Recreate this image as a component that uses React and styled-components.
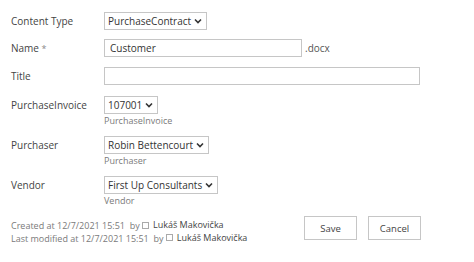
import React from 'react';
import styled, { createGlobalStyle } from 'styled-components';

const Global = createGlobalStyle`
    body {
        margin: 0;
        background: #FFFFFF;
        font-family: "Open Sans", "Noto Sans", sans-serif;
    }
`

const Page = styled.div`
    width: 474px;
    height: 262px;
    padding: 12px 0 0 11px;
    box-sizing: border-box;
    display: flex;
    flex-direction: column;
`

const Row = styled.div`
    display: flex;
    align-items: flex-start;
    margin-bottom: ${p => p.$gap ?? 9}px;
`

const Label = styled.div`
    width: 93px;
    flex-shrink: 0;
    font-size: 10px;
    line-height: 18px;
    color: #444444;
`

const Star = styled.span`
    color: #888888;
    font-size: 9px;
`

const Field = styled.div`
    display: flex;
    flex-direction: column;
    align-items: flex-start;
`

const Inline = styled.div`
    display: flex;
    align-items: center;
`

const Dropdown = styled.div`
    height: 18px;
    box-sizing: border-box;
    border: 1px solid #C6C6C6;
    display: inline-flex;
    align-items: center;
    gap: 3px;
    padding: 0 4px 0 3px;
    font-size: 10px;
    color: #333333;
    background: #FFFFFF;
`

const Input = styled.div`
    width: ${p => p.$width}px;
    height: 18px;
    box-sizing: border-box;
    border: 1px solid #C6C6C6;
    padding: 0 5px;
    font-size: 10px;
    line-height: 16px;
    color: #333333;
`

const Suffix = styled.span`
    font-size: 10px;
    color: #555555;
    margin-left: 3px;
`

const Hint = styled.div`
    font-size: 9px;
    line-height: 13px;
    color: #7A7A7A;
`

const Footer = styled.div`
    display: flex;
    align-items: flex-start;
`

const Meta = styled.div`
    width: 293px;
    font-size: 9px;
    line-height: 12px;
    color: #7A7A7A;
    padding-top: 3px;
`

const Who = styled.span`
    color: #444444;
    display: inline-flex;
    align-items: center;
    gap: 4px;
`

const Box = styled.span`
    width: 7px;
    height: 7px;
    border: 1px solid #AAAAAA;
    box-sizing: border-box;
    display: inline-block;
`

const Buttons = styled.div`
    display: flex;
    gap: 11px;
`

const Button = styled.button`
    width: 53px;
    height: 24px;
    border: 1px solid #C6C6C6;
    background: #FFFFFF;
    font-family: inherit;
    font-size: 9.5px;
    color: #444444;
    padding: 0;
`

const Chevron = () => (
    <svg width="8" height="6" viewBox="0 0 8 6">
        <path d="M1 1.5 L4 4.5 L7 1.5" fill="none" stroke="#333" strokeWidth="1.6"/>
    </svg>
)

const Select = ({ children }) => (
    <Dropdown>{children}<Chevron/></Dropdown>
)

const By = ({ name }) => (
    <>
        &nbsp;&nbsp;by <Who><Box/>{name}</Who>
    </>
)

const App = () => {
    return (
        <Page>
            <Global/>
            <Row>
                <Label>Content Type</Label>
                <Select>PurchaseContract</Select>
            </Row>
            <Row>
                <Label>Name <Star>*</Star></Label>
                <Inline>
                    <Input $width={198}>Customer</Input>
                    <Suffix>.docx</Suffix>
                </Inline>
            </Row>
            <Row $gap={11}>
                <Label>Title</Label>
                <Input $width={316}/>
            </Row>
            <Row>
                <Label>PurchaseInvoice</Label>
                <Field>
                    <Select>107001</Select>
                    <Hint>PurchaseInvoice</Hint>
                </Field>
            </Row>
            <Row>
                <Label>Purchaser</Label>
                <Field>
                    <Select>Robin Bettencourt</Select>
                    <Hint>Purchaser</Hint>
                </Field>
            </Row>
            <Row>
                <Label>Vendor</Label>
                <Field>
                    <Select>First Up Consultants</Select>
                    <Hint>Vendor</Hint>
                </Field>
            </Row>
            <Footer>
                <Meta>
                    <div>Created at 12/7/2021 15:51<By name="Lukáš Makovička"/></div>
                    <div>Last modified at 12/7/2021 15:51<By name="Lukáš Makovička"/></div>
                </Meta>
                <Buttons>
                    <Button>Save</Button>
                    <Button>Cancel</Button>
                </Buttons>
            </Footer>
        </Page>
    )
}

export default App
